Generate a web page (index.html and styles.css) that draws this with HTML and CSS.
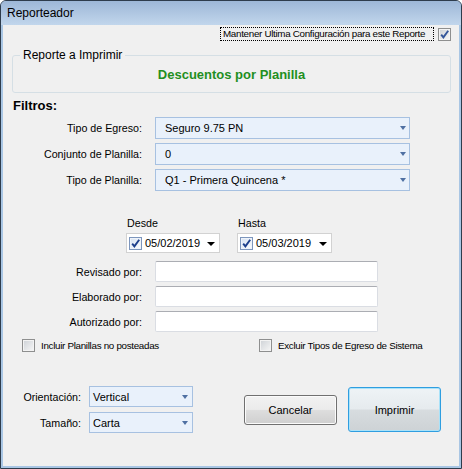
FILE: index.html
```html
<!DOCTYPE html>
<html lang="es">
<head>
<meta charset="utf-8">
<title>Reporteador</title>
<link rel="stylesheet" href="styles.css">
</head>
<body>
<div class="window">
  <div class="titlebar">Reporteador</div>
  <div class="client">
    <div class="keep-row">
      <span class="focus-label">Mantener Ultima Configuración para este Reporte</span>
      <span class="chk"><svg viewBox="0 0 11 11" width="11" height="11"><path d="M2.2 5.6 L4.4 8.4 L9.2 1.8" fill="none" stroke="#34569a" stroke-width="1.9"/></svg></span>
    </div>

    <fieldset class="group">
      <legend>Reporte a Imprimir</legend>
      <div class="report-name">Descuentos por Planilla</div>
    </fieldset>

    <div class="section-title">Filtros:</div>

    <div class="form-grid filters">
      <span class="field-label">Tipo de Egreso:</span>
      <div class="combo"><span class="combo-text">Seguro 9.75 PN</span><i class="arrow"></i></div>
      <span class="field-label">Conjunto de Planilla:</span>
      <div class="combo"><span class="combo-text">0</span><i class="arrow"></i></div>
      <span class="field-label">Tipo de Planilla:</span>
      <div class="combo"><span class="combo-text">Q1 - Primera Quincena *</span><i class="arrow"></i></div>
    </div>

    <div class="dates">
      <div class="date-col">
        <div class="date-label">Desde</div>
        <div class="datepicker">
          <span class="chk chk-blue"><svg viewBox="0 0 11 11" width="11" height="11"><path d="M2.2 5.6 L4.4 8.4 L9.2 1.8" fill="none" stroke="#1d3f8c" stroke-width="1.9"/></svg></span>
          <span class="date-text">05/02/2019</span>
          <i class="dp-arrow"></i>
        </div>
      </div>
      <div class="date-col">
        <div class="date-label">Hasta</div>
        <div class="datepicker wide">
          <span class="chk chk-blue"><svg viewBox="0 0 11 11" width="11" height="11"><path d="M2.2 5.6 L4.4 8.4 L9.2 1.8" fill="none" stroke="#1d3f8c" stroke-width="1.9"/></svg></span>
          <span class="date-text">05/03/2019</span>
          <i class="dp-arrow"></i>
        </div>
      </div>
    </div>

    <div class="form-grid signers">
      <span class="field-label">Revisado por:</span>
      <div class="textbox"></div>
      <span class="field-label">Elaborado por:</span>
      <div class="textbox"></div>
      <span class="field-label">Autorizado por:</span>
      <div class="textbox"></div>
    </div>

    <div class="options">
      <div class="opt"><span class="chk"></span><span>Incluir Planillas no posteadas</span></div>
      <div class="opt"><span class="chk"></span><span>Excluir Tipos de Egreso de Sistema</span></div>
    </div>

    <div class="bottom">
      <div class="page-setup">
        <span class="field-label">Orientación:</span>
        <div class="combo combo-sm"><span class="combo-text">Vertical</span><i class="arrow"></i></div>
        <span class="field-label">Tamaño:</span>
        <div class="combo combo-sm"><span class="combo-text">Carta</span><i class="arrow"></i></div>
      </div>
      <div class="buttons">
        <button class="btn btn-cancel" type="button">Cancelar</button>
        <button class="btn btn-default" type="button">Imprimir</button>
      </div>
    </div>
  </div>
</div>
</body>
</html>
```

FILE: styles.css
```css
* { box-sizing: border-box; }

html, body {
  margin: 0;
  padding: 0;
  background: #ffffff;
}

body {
  font-family: "Liberation Sans", Arial, sans-serif;
  font-size: 11px;
  color: #000;
}

.window {
  width: 462px;
  height: 469px;
  border: 1px solid #2e3c4c;
  border-radius: 6px 6px 0 0;
  background: #a9c6e4;
  padding: 0 2px 2px;
  display: flex;
  flex-direction: column;
  overflow: hidden;
}

.titlebar {
  height: 24px;
  line-height: 24px;
  margin: 0 -2px;
  padding-left: 6px;
  font-size: 12px;
  background: linear-gradient(#9db7d7, #c1d6ec);
}

.client {
  flex: 1;
  background: #f0f0f0;
  display: flex;
  flex-direction: column;
}

/* keep configuration row */
.keep-row {
  margin-top: 2px;
  height: 14px;
  display: flex;
  justify-content: flex-end;
  align-items: center;
  gap: 4px;
  padding-right: 8px;
}

.focus-label {
  width: 214px;
  height: 14px;
  line-height: 12px;
  border: 1px dotted #000;
  padding-left: 2px;
  font-size: 9.8px;
  letter-spacing: -0.3px;
  white-space: nowrap;
}

/* checkboxes */
.chk {
  width: 13px;
  height: 13px;
  flex-shrink: 0;
  display: inline-flex;
  align-items: center;
  justify-content: center;
  border: 1px solid #8e8f8f;
  background: linear-gradient(135deg, #cdd1d6, #f7f7f7);
  box-shadow: inset 0 0 0 1px #f3f3f3;
}

.chk-blue {
  border-color: #7d96bd;
  background: linear-gradient(135deg, #d6e2f2, #fbfcfe);
  box-shadow: inset 0 0 0 1px #eef3fa;
}

/* group box */
.group {
  margin: 7px 8px 0 9px;
  padding: 0 4px 4px;
  border: 1px solid #d5dfe5;
  border-radius: 3px;
  min-width: 0;
}

.group legend {
  margin-left: 3px;
  padding: 0 3px;
  font-size: 12px;
  line-height: 14px;
}

.report-name {
  height: 26px;
  line-height: 26px;
  text-align: center;
  font-weight: bold;
  font-size: 13px;
  color: #1f8f22;
}

.section-title {
  margin-top: 5px;
  padding-left: 10px;
  font-weight: bold;
  font-size: 13px;
  line-height: 16px;
}

/* form grids */
.form-grid {
  display: grid;
  column-gap: 13px;
  row-gap: 4px;
}

.filters {
  margin-top: 3px;
  grid-template-columns: 139px 255px;
  grid-auto-rows: 22px;
}

.signers {
  margin-top: 8px;
  grid-template-columns: 139px 223px;
  grid-auto-rows: 21px;
}

.field-label {
  text-align: right;
  align-self: center;
  white-space: nowrap;
  font-size: 10.7px;
}

/* combos */
.combo {
  display: flex;
  align-items: center;
  background: #e9f1fb;
  border: 1px solid #a7c1e1;
  padding-left: 9px;
  padding-right: 3px;
}

.combo-text {
  flex: 1;
  white-space: nowrap;
}

.arrow {
  width: 0;
  height: 0;
  border-left: 3.5px solid transparent;
  border-right: 3.5px solid transparent;
  border-top: 4px solid #4f70a2;
}

.combo-sm {
  padding-left: 3px;
  padding-right: 4px;
}

/* dates */
.dates {
  margin-top: 26px;
  padding-left: 123px;
  display: flex;
  gap: 17px;
}

.date-label {
  height: 12px;
  line-height: 12px;
  margin-bottom: 4px;
  padding-left: 1px;
  font-size: 10.7px;
}

.datepicker {
  width: 94px;
  height: 20px;
  display: flex;
  align-items: center;
  background: #fff;
  border: 1px solid #d2d2d2;
  padding-left: 2px;
  padding-right: 4px;
}

.datepicker.wide { width: 95px; }

.date-text {
  margin-left: 3px;
  flex: 1;
  font-size: 11px;
}

.dp-arrow {
  width: 0;
  height: 0;
  border-left: 4px solid transparent;
  border-right: 4px solid transparent;
  border-top: 4px solid #000;
  margin-top: 1px;
}

/* text boxes */
.textbox {
  background: #fff;
  border: 1px solid #dadde3;
  border-top-color: #abadb3;
  border-radius: 2px;
}

/* options */
.options {
  margin-top: 7px;
  padding-left: 19px;
  display: grid;
  grid-template-columns: 237px auto;
  height: 13px;
}

.opt {
  display: flex;
  align-items: center;
  gap: 6px;
  font-size: 9.8px;
  letter-spacing: -0.3px;
  white-space: nowrap;
}

/* bottom */
.bottom {
  margin-top: 34px;
  display: flex;
  align-items: center;
  padding-right: 18px;
}

.page-setup {
  display: grid;
  grid-template-columns: 78px 104px;
  grid-auto-rows: 21px;
  column-gap: 8px;
  row-gap: 5px;
}

.buttons {
  margin-left: auto;
  display: flex;
  align-items: center;
  gap: 11px;
}

.btn {
  width: 93px;
  font-family: inherit;
  font-size: 11px;
  color: #000;
  border: 1px solid #707070;
  border-radius: 3px;
  background: linear-gradient(#f2f2f2 0%, #ebebeb 48%, #dddddd 52%, #cfcfcf 100%);
  box-shadow: inset 0 0 0 1px #fbfbfb;
  padding: 0;
}

.btn-cancel { height: 30px; }

.btn-default {
  height: 45px;
  border-color: #2f9ee0;
  box-shadow: inset 0 0 0 1px #a9e2f9;
  background: linear-gradient(#eef3f6 0%, #e6ebee 48%, #d7dcdf 52%, #cdd2d5 100%);
}
```
